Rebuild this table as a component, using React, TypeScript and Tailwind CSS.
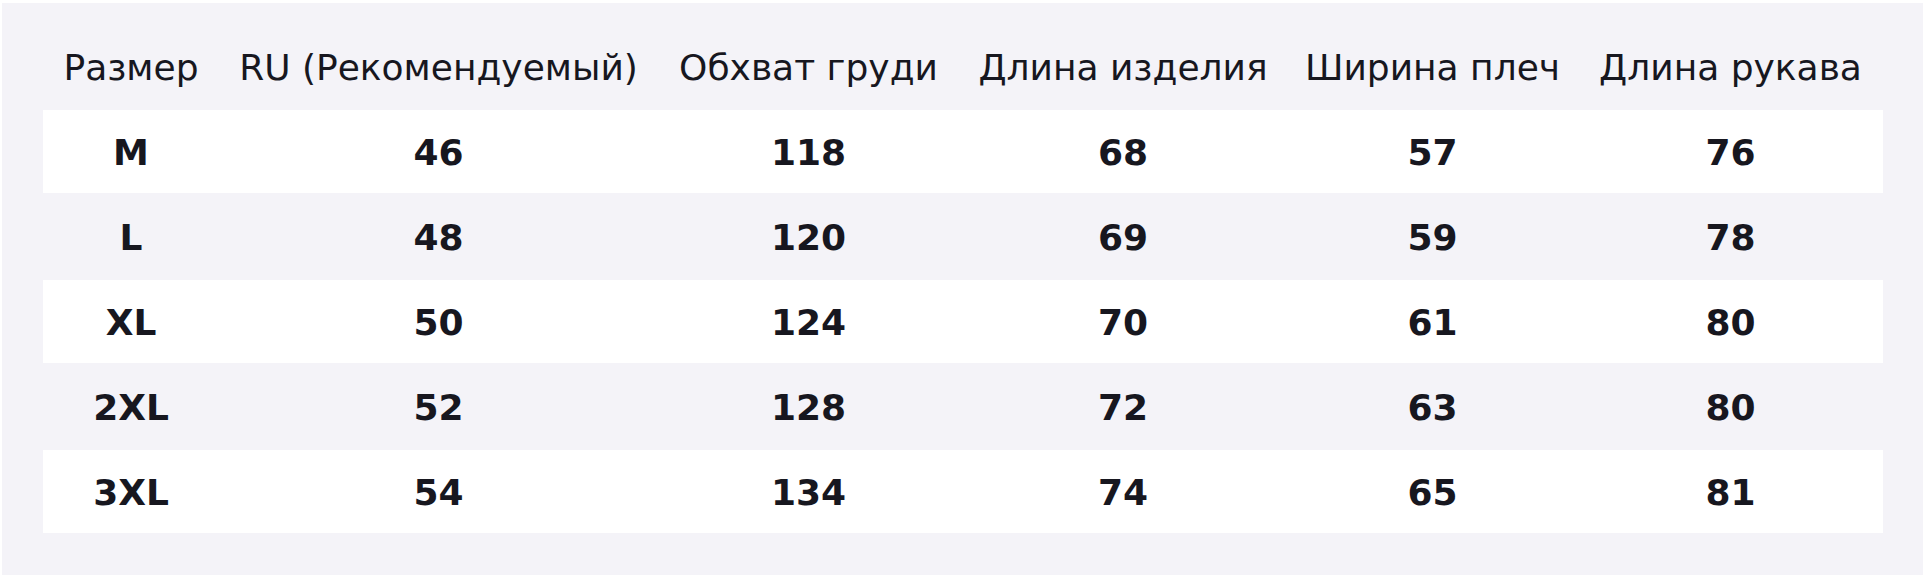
const headers = [
  "Размер",
  "RU (Рекомендуемый)",
  "Обхват груди",
  "Длина изделия",
  "Ширина плеч",
  "Длина рукава",
];

const rows = [
  ["M", "46", "118", "68", "57", "76"],
  ["L", "48", "120", "69", "59", "78"],
  ["XL", "50", "124", "70", "61", "80"],
  ["2XL", "52", "128", "72", "63", "80"],
  ["3XL", "54", "134", "74", "65", "81"],
];

const cols =
  "grid grid-cols-[176px_439px_301px_328px_291px_305px] w-[1840px]";

const App = () => {
  return (
    <div className="w-[1926px] h-[578px] bg-white pt-[3px] pl-[2px]">
      <div
        className="w-[1921px] h-[572px] bg-[#f4f3f8] pt-[44px] pl-[41px] text-[#17171f] text-[36px]"
        style={{ fontFamily: '"DejaVu Sans", "Noto Sans", sans-serif' }}
      >
        <div className={`${cols} h-[63px]`}>
          {headers.map((h) => (
            <div key={h} className="text-center leading-[42px] whitespace-nowrap">
              {h}
            </div>
          ))}
        </div>
        {rows.map((row, i) => (
          <div
            key={row[0]}
            className={`${cols} items-center font-bold ${
              i % 2 === 0 ? "bg-white h-[83px]" : "h-[87px]"
            }`}
          >
            {row.map((cell, j) => (
              <div key={j} className="text-center leading-[42px] pt-[3px]">
                {cell}
              </div>
            ))}
          </div>
        ))}
      </div>
    </div>
  );
};

export default App;
